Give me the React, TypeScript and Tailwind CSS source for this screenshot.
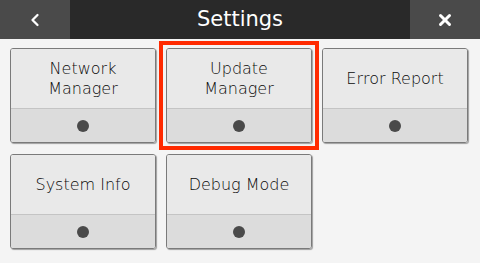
import { ChevronLeft, X } from 'lucide-react';

// 설정 화면 — 타일 그리드

type Tile = { label: string[]; focused?: boolean };

const ROWS: Tile[][] = [
  [
    { label: ['Network', 'Manager'] },
    { label: ['Update', 'Manager'], focused: true },
    { label: ['Error Report'] },
  ],
  [{ label: ['System Info'] }, { label: ['Debug Mode'] }],
];

function TileCard({ tile }: { tile: Tile }) {
  return (
    <div className="relative w-[146px] h-[95px]">
      <div className="w-full h-full flex flex-col rounded-[3px] border border-[#7a7a7a] overflow-hidden shadow-[1px_1px_1px_rgba(0,0,0,0.35)]">
        <div className="h-[59px] flex flex-col items-center justify-center bg-[#e9e9e9] text-[16px] leading-[20px] font-extralight text-[#0a0a0a]">
          {tile.label.map((l) => (
            <span key={l}>{l}</span>
          ))}
        </div>
        <div className="flex-1 flex items-center justify-center bg-[#dcdcdc] border-t border-[#c4c4c4]">
          <span className="w-[12px] h-[12px] rounded-full bg-[#4a4a4a]" />
        </div>
      </div>
      {/* 포커스 링 */}
      {tile.focused && (
        <span className="absolute -inset-[7px] border-4 border-[#ff2a00] pointer-events-none" />
      )}
    </div>
  );
}

export default function App() {
  return (
    <div
      className="w-[480px] h-[263px] bg-[#f4f4f4] flex flex-col"
      style={{ fontFamily: '"DejaVu Sans", sans-serif' }}
    >
      <div className="h-[39px] flex bg-[#292929] text-white">
        <div className="w-[70px] flex items-center justify-center bg-[#4a4a4a]">
          <ChevronLeft className="w-5 h-5" strokeWidth={2.75} />
        </div>
        <div className="flex-1 flex items-center justify-center text-[21px]">Settings</div>
        <div className="w-[70px] flex items-center justify-center bg-[#4a4a4a]">
          <X className="w-[18px] h-[18px]" strokeWidth={4} />
        </div>
      </div>
      <div className="flex flex-col gap-[11px] pl-[10px] pt-[9px]">
        {ROWS.map((row, i) => (
          <div key={i} className="flex gap-[10px]">
            {row.map((t) => (
              <TileCard key={t.label.join(' ')} tile={t} />
            ))}
          </div>
        ))}
      </div>
    </div>
  );
}
